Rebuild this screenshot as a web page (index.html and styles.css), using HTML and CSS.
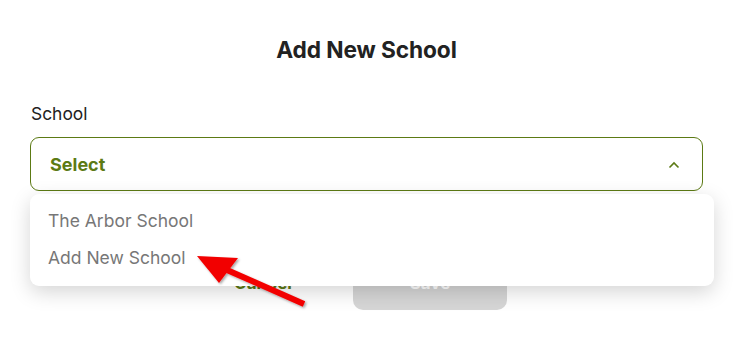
FILE: index.html
```html
<!DOCTYPE html>
<html>
<head>
<meta charset="utf-8">
<link rel="stylesheet" href="styles.css">
</head>
<body>
<div class="modal">
  <h1 class="title">Add New School</h1>
  <div class="field">
    <label class="label">School</label>
    <div class="select-wrap">
      <div class="select">
        <span class="select-text">Select</span>
        <svg class="chev" width="12" height="8" viewBox="0 0 12 8"><path d="M1.5 6.5 L6 2 L10.5 6.5" fill="none" stroke="#5c7a14" stroke-width="1.6"/></svg>
      </div>
      <div class="menu">
        <div class="option">The Arbor School</div>
        <div class="option">Add New School</div>
      </div>
    </div>
  </div>
  <div class="actions">
    <button class="btn-cancel">Cancel</button>
    <button class="btn-save">Save</button>
  </div>
  <svg class="arrow" width="130" height="70" viewBox="0 0 130 70">
    <defs>
      <filter id="sh" x="-20%" y="-20%" width="140%" height="140%">
        <feDropShadow dx="1.5" dy="1.5" stdDeviation="1.2" flood-color="#000" flood-opacity="0.35"/>
      </filter>
    </defs>
    <g filter="url(#sh)">
      <line x1="107" y1="48" x2="30" y2="14" stroke="#f20000" stroke-width="6" stroke-linecap="butt"/>
      <polygon points="0,0 41,2 22,27" fill="#f20000"/>
    </g>
  </svg>
</div>
</body>
</html>
```
FILE: styles.css
```css
* { box-sizing: border-box; }
html, body { margin: 0; padding: 0; background: #fff; }
body { font-family: Inter, Roboto, sans-serif; color: #222; }
.modal { position: relative; width: 735px; height: 339px; padding: 37px 32px 0 30px; }
.title { margin: 0; text-align: center; font-size: 22.7px; font-weight: 700; color: #222; line-height: 26px; letter-spacing: -0.1px; }
.field { margin-top: 40px; }
.label { display: block; font-size: 17.4px; line-height: 21px; color: #222; padding-left: 1px; }
.select-wrap { position: relative; margin-top: 13px; }
.select { height: 54px; border: 1px solid #5c7a14; border-radius: 9px; display: flex; align-items: center; justify-content: space-between; padding: 0 22px 0 19px; }
.select-text { font-weight: 700; font-size: 18px; color: #5c7a14; }
.chev { margin-top: 1px; }
.menu { position: absolute; left: 0; top: 57px; width: 684px; background: #fff; border-radius: 9px; box-shadow: 0 6px 20px rgba(0,0,0,0.17); padding: 8px 0 10px; z-index: 2; }
.option { padding: 0 18px; font-size: 17.5px; line-height: 37px; color: #777; }
.actions { display: flex; justify-content: center; align-items: center; gap: 58px; margin-top: 64px; padding-left: 5px; }
.btn-cancel { background: none; border: 0; font: inherit; font-size: 17px; font-weight: 700; color: #5c7a14; padding: 0; width: 64px; }
.btn-save { width: 154px; height: 55px; border: 0; border-radius: 10px; background: #d6d6d6; color: #fff; font: inherit; font-size: 17px; font-weight: 700; }
.arrow { position: absolute; left: 197px; top: 256px; z-index: 3; overflow: visible; }
```
